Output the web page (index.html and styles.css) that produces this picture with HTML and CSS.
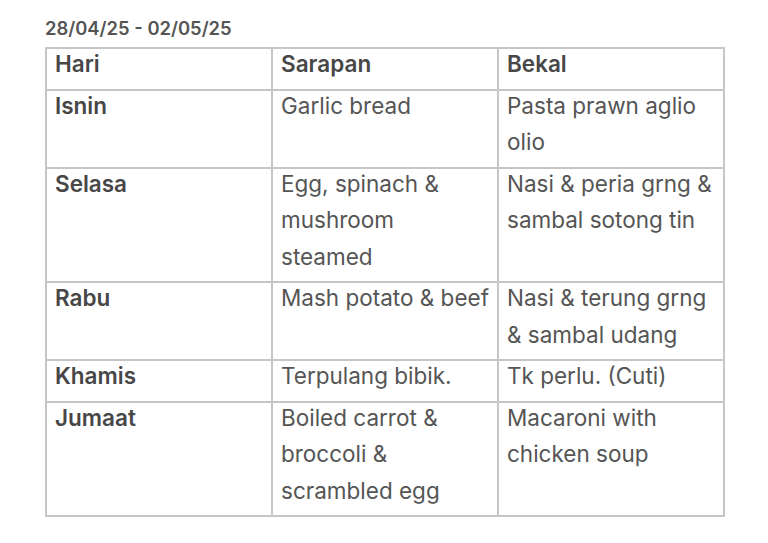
FILE: index.html
```html
<!DOCTYPE html>
<html lang="ms">
<head>
<meta charset="utf-8">
<title>Menu</title>
<link rel="stylesheet" href="styles.css">
</head>
<body>
<div class="page">
  <div class="title">28/04/25 - 02/05/25</div>
  <table class="menu">
    <colgroup><col class="c1"><col class="c2"><col class="c3"></colgroup>
    <thead>
      <tr><th><div class="cell">Hari</div></th><th><div class="cell">Sarapan</div></th><th><div class="cell">Bekal</div></th></tr>
    </thead>
    <tbody>
      <tr><th><div class="cell">Isnin</div></th><td><div class="cell">Garlic bread</div></td><td><div class="cell">Pasta prawn aglio olio</div></td></tr>
      <tr><th><div class="cell">Selasa</div></th><td><div class="cell">Egg, spinach &amp; mushroom steamed</div></td><td><div class="cell">Nasi &amp; peria grng &amp; sambal sotong tin</div></td></tr>
      <tr><th><div class="cell">Rabu</div></th><td><div class="cell">Mash potato &amp; beef</div></td><td><div class="cell">Nasi &amp; terung grng &amp; sambal udang</div></td></tr>
      <tr><th><div class="cell">Khamis</div></th><td><div class="cell">Terpulang bibik.</div></td><td><div class="cell">Tk perlu. (Cuti)</div></td></tr>
      <tr><th><div class="cell">Jumaat</div></th><td><div class="cell">Boiled carrot &amp; broccoli &amp; scrambled egg</div></td><td><div class="cell">Macaroni with chicken soup</div></td></tr>
    </tbody>
  </table>
</div>
</body>
</html>
```
FILE: styles.css
```css
html, body {
  margin: 0;
  padding: 0;
  background: #ffffff;
}
.page {
  padding: 17px 0 0 45px;
  font-family: Inter, "Liberation Sans", Arial, sans-serif;
}
.title {
  font-size: 18.4px;
  font-weight: 600;
  color: #555555;
  line-height: 22px;
  margin-bottom: 8px;
}
.menu {
  border-collapse: collapse;
  table-layout: fixed;
  width: 680px;
  border: 2px solid #c6c6c6;
}
.c1, .c2, .c3 { width: 226px; }
.menu th, .menu td {
  border: 2px solid #c6c6c6;
  text-align: left;
  vertical-align: top;
  font-size: 22.5px;
  line-height: 36.5px;
  padding: 0 7px 0 8px;
  color: #555555;
  font-weight: 400;
}
.menu th {
  font-weight: 600;
  color: #474747;
}
.cell {
  margin-top: -3px;
  padding-bottom: 6px;
}
```
